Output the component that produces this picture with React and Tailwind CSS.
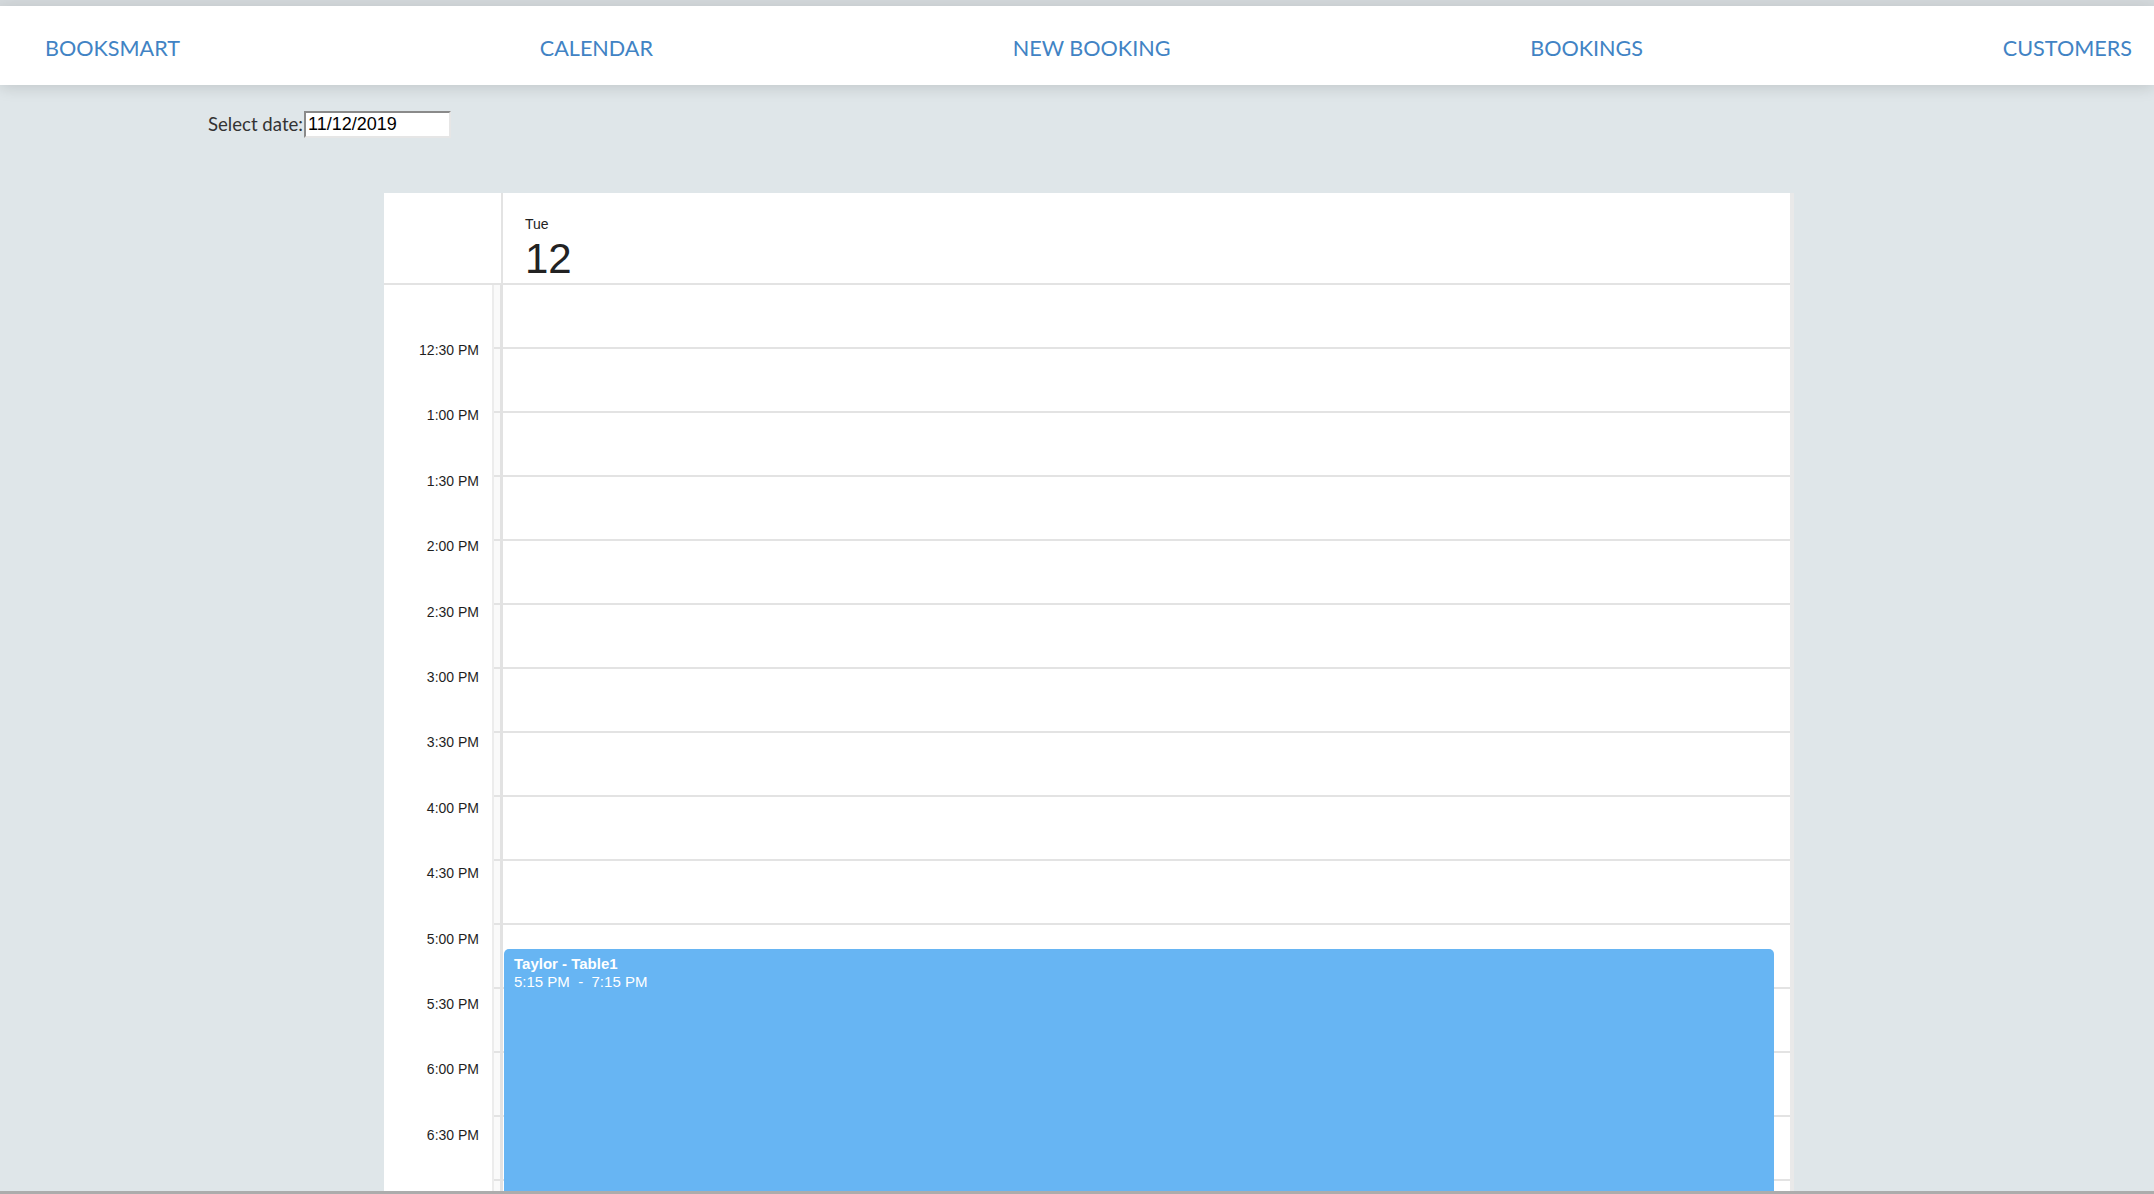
import React from "react";

const navItems = ["BOOKSMART", "CALENDAR", "NEW BOOKING", "BOOKINGS", "CUSTOMERS"];

const timeLabels = [
  "12:30 PM",
  "1:00 PM",
  "1:30 PM",
  "2:00 PM",
  "2:30 PM",
  "3:00 PM",
  "3:30 PM",
  "4:00 PM",
  "4:30 PM",
  "5:00 PM",
  "5:30 PM",
  "6:00 PM",
  "6:30 PM",
];

const slots = Array.from({ length: 16 }, (_, i) => i);

const App = () => {
  return (
    <div className="h-[1194px] overflow-hidden flex flex-col bg-[#dfe6e9] border-b-[3px] border-[#acacac] font-['Liberation_Sans',Arial,sans-serif]">
      {/* Top strip */}
      <div className="h-[6px] shrink-0 bg-[#d4d9dc]" />

      {/* Navbar */}
      <nav className="h-[79px] shrink-0 bg-white flex items-center justify-between pl-[45px] pr-[22px] pt-[6px] shadow-[0_3px_14px_rgba(0,0,0,0.13)] relative z-10 font-['Lato',sans-serif] text-[21.6px] text-[#4183c4]">
        {navItems.map((item) => (
          <a key={item} href="#" className="leading-none">
            {item}
          </a>
        ))}
      </nav>

      {/* Date picker */}
      <div className="shrink-0 flex items-center pl-[208px] pt-[26px]">
        <label className="font-['Lato',sans-serif] text-[18.6px] text-[#333] mr-[1px]">Select date:</label>
        <input
          type="text"
          defaultValue="11/12/2019"
          className="w-[147px] h-[27px] bg-white border-2 border-t-[#8a8a8a] border-l-[#8a8a8a] border-r-[#e6e6e6] border-b-[#e6e6e6] px-[2px] text-[18px] text-black outline-none font-['Liberation_Sans',Arial,sans-serif]"
        />
      </div>

      {/* Calendar */}
      <div className="flex-1 min-h-0 mt-[54px] ml-[384px] w-[1410px] bg-white border-r-[4px] border-[#e9e9e9] flex flex-col overflow-hidden">
        {/* Header */}
        <div className="shrink-0 flex border-b-2 border-[#e3e3e3] h-[92px]">
          <div className="w-[117px]" />
          <div className="flex-1 border-l-2 border-[#e3e3e3] pl-[22px] pt-[23px] text-[#222]">
            <div className="text-[14px] leading-[16px]">Tue</div>
            <div className="text-[42px] leading-[48px] mt-[3px]">12</div>
          </div>
        </div>

        {/* Body */}
        <div className="flex-1 min-h-0 flex">
          <div className="w-[108px] pt-[33px] pr-[13px] text-[14px] text-[#1f1f1f]">
            {timeLabels.map((t) => (
              <div key={t} className="h-[65.4px] flex items-center justify-end">
                {t}
              </div>
            ))}
          </div>
          <div className="w-[11px] border-l-2 border-r-[3px] border-l-[#ececec] border-r-[#e2e2e2] bg-[#fafafa]">
            {slots.map((s) => (
              <div key={s} className="h-[64px] border-b-2 border-[#e3e3e3]" />
            ))}
          </div>
          <div className="flex-1 relative">
            {slots.map((s) => (
              <div key={s} className="h-[64px] border-b-2 border-[#e3e3e3]" />
            ))}
            {/* Event */}
            <div className="absolute top-[664px] left-[1px] right-[16px] h-[300px] bg-[#67b5f3] rounded-t-[5px] pl-[10px] pt-[6px] text-white text-[15px] leading-[18px]">
              <div className="font-bold">Taylor - Table1</div>
              <div className="whitespace-pre">5:15 PM  -  7:15 PM</div>
            </div>
          </div>
        </div>
      </div>
    </div>
  );
};

export default App;
